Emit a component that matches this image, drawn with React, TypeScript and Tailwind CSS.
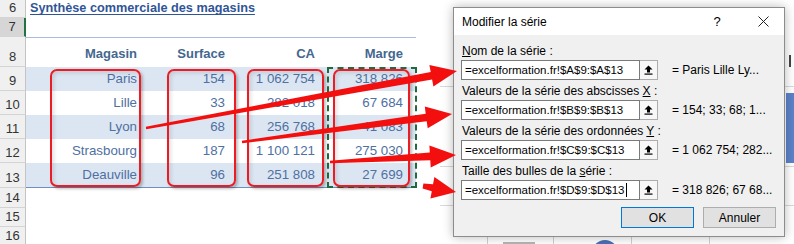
import React from 'react';
import clsx from 'clsx';

const stores = [
  { name: 'Paris', surface: '154', ca: '1 062 754', marge: '318 826' },
  { name: 'Lille', surface: '33', ca: '282 018', marge: '67 684' },
  { name: 'Lyon', surface: '68', ca: '256 768', marge: '41 083' },
  { name: 'Strasbourg', surface: '187', ca: '1 100 121', marge: '275 030' },
  { name: 'Deauville', surface: '96', ca: '251 808', marge: '27 699' },
];

const dataHeights = ['h-[24px]', 'h-[24px]', 'h-[24px]', 'h-[24px]', 'h-[25px]'];

// arrow shape: thin tail, thicker neck, triangular head
function arrowPoints(tx: number, ty: number, px: number, py: number, w1 = 1, w2 = 3.5, head = 26, half = 11) {
  const dx = px - tx;
  const dy = py - ty;
  const len = Math.hypot(dx, dy);
  const ux = dx / len;
  const uy = dy / len;
  const nx = -uy;
  const ny = ux;
  const bx = px - ux * head;
  const by = py - uy * head;
  const pts = [
    [tx + nx * w1, ty + ny * w1],
    [bx + nx * w2, by + ny * w2],
    [bx + nx * half, by + ny * half],
    [px, py],
    [bx - nx * half, by - ny * half],
    [bx - nx * w2, by - ny * w2],
    [tx - nx * w1, ty - ny * w1],
  ];
  return pts.map((p) => p.map((v) => v.toFixed(1)).join(',')).join(' ');
}

const RowHead: React.FC<{ n: number; active?: boolean }> = ({ n, active }) => (
  <div
    className={clsx(
      'flex w-[26px] shrink-0 items-end justify-center border-b border-b-[#d4d4d4] pb-[2px] text-[13px] leading-[15px]',
      active ? 'border-r-2 border-r-[#217346] bg-[#d6d6d6] text-[#333]' : 'border-r border-r-[#c4c4c4] bg-[#f0f0f0] text-[#333]'
    )}
  >
    {n}
  </div>
);

const Field: React.FC<{ label: React.ReactNode; formula: string; result: string; caret?: boolean }> = ({ label, formula, result, caret }) => (
  <div className="flex flex-col">
    <div className="h-[16px] pl-[1px] text-[12px] leading-[16px]">{label}</div>
    <div className="mt-[1px] flex h-[20px] items-center">
      <div className="flex h-[20px] w-[179px] items-center border border-[#7a7a7a] bg-white px-[3px] text-[11.5px] leading-[18px]">
        <span className="whitespace-nowrap">{formula}</span>
        {caret && <span className="ml-[1px] h-[14px] w-px bg-black" />}
      </div>
      <div className="flex h-[20px] w-[18px] items-center justify-center border border-l-0 border-[#adadad] bg-[#f7f7f7]">
        <svg width="9" height="10" viewBox="0 0 9 10">
          <polygon points="4.5,0.5 8.5,4.5 6,4.5 6,7.5 3,7.5 3,4.5 0.5,4.5" fill="#000" />
          <rect x="0.5" y="8.5" width="8" height="1.2" fill="#000" />
        </svg>
      </div>
      <span className="ml-[14px] whitespace-nowrap text-[12px]">{result}</span>
    </div>
  </div>
);

export default function App() {
  return (
    <div className="relative h-[244px] w-[794px] overflow-hidden bg-white font-['Liberation_Sans',Arial,sans-serif]">
      {/* Sheet */}
      <div className="flex flex-col">
        {/* row 6 */}
        <div className="flex h-[18px]">
          <RowHead n={6} />
          <div className="flex items-center pl-[4px] text-[12.7px] font-bold text-[#2f5597] underline underline-offset-2">
            Synthèse commerciale des magasins
          </div>
        </div>
        {/* row 7 */}
        <div className="flex h-[19px]">
          <RowHead n={7} active />
        </div>
        {/* row 8 headers */}
        <div className="flex h-[30px]">
          <RowHead n={8} />
          <div className="flex w-[390px] border-t border-[#a9bcd9] pt-[2px] text-[13px] font-bold text-[#44678f]">
            <div className="flex w-[124px] items-center justify-end pr-[13px]">Magasin</div>
            <div className="flex w-[89px] items-center justify-end pr-[14px]">Surface</div>
            <div className="flex w-[89px] items-center justify-end pr-[13px]">CA</div>
            <div className="flex w-[88px] items-center justify-end pr-[13px]">Marge</div>
          </div>
        </div>
        {/* rows 9-13 */}
        {stores.map((s, i) => (
          <div key={s.name} className={clsx('flex', dataHeights[i])}>
            <RowHead n={9 + i} />
            <div
              className={clsx(
                'flex w-[390px] text-[13.3px] text-[#4e70a2]',
                i % 2 === 0 ? 'bg-[#dce6f2]' : 'bg-white',
                i === 4 && 'border-b border-[#6f8fbf]'
              )}
            >
              <div className="flex w-[124px] items-center justify-end pr-[13px] whitespace-nowrap">{s.name}</div>
              <div className="flex w-[89px] items-center justify-end pr-[14px] whitespace-nowrap">{s.surface}</div>
              <div className="flex w-[89px] items-center justify-end pr-[13px] whitespace-nowrap">{s.ca}</div>
              <div className="flex w-[88px] items-center justify-end pr-[13px] whitespace-nowrap">{s.marge}</div>
            </div>
          </div>
        ))}
        <div className="flex h-[20px]">
          <RowHead n={14} />
        </div>
        <div className="flex h-[19px]">
          <RowHead n={15} />
        </div>
        <div className="flex h-[19px]">
          <RowHead n={16} />
        </div>
      </div>

      {/* Copy marquee on Marge column */}
      <div className="absolute left-[327px] top-[67px] h-[121px] w-[90px] border-2 border-dashed border-[#1f6b3f]" />

      {/* Red highlight boxes */}
      <div className="absolute left-[50px] top-[69px] h-[118px] w-[91px] rounded-[7px] border-2 border-[#ec1c24] shadow-[2px_2px_3px_rgba(0,0,0,0.25),inset_2px_2px_4px_rgba(0,0,0,0.12)]" />
      <div className="absolute left-[167px] top-[69px] h-[118px] w-[69px] rounded-[7px] border-2 border-[#ec1c24] shadow-[2px_2px_3px_rgba(0,0,0,0.25),inset_2px_2px_4px_rgba(0,0,0,0.12)]" />
      <div className="absolute left-[247px] top-[69px] h-[118px] w-[77px] rounded-[7px] border-2 border-[#ec1c24] shadow-[2px_2px_3px_rgba(0,0,0,0.25),inset_2px_2px_4px_rgba(0,0,0,0.12)]" />
      <div className="absolute left-[333px] top-[69px] h-[118px] w-[77px] rounded-[7px] border-2 border-[#ec1c24] shadow-[2px_2px_3px_rgba(0,0,0,0.25),inset_2px_2px_4px_rgba(0,0,0,0.12)]" />

      {/* Chart behind the dialog */}
      <svg className="absolute left-[416px] top-0" width="378" height="244" viewBox="416 0 378 244">
        <line x1="440" y1="86.5" x2="794" y2="86.5" stroke="#d9d9d9" />
        <line x1="440" y1="166.5" x2="794" y2="166.5" stroke="#d9d9d9" />
        <line x1="440" y1="205.5" x2="794" y2="205.5" stroke="#d9d9d9" />
        <rect x="786" y="93" width="8" height="70" fill="#5b82c8" />
        <rect x="789" y="55" width="2" height="12" fill="#444" />
        <line x1="487.5" y1="200" x2="487.5" y2="244" stroke="#d0d0d0" />
        <line x1="553.5" y1="200" x2="553.5" y2="244" stroke="#d0d0d0" />
        <line x1="631.5" y1="200" x2="631.5" y2="244" stroke="#d0d0d0" />
        <line x1="709.5" y1="200" x2="709.5" y2="244" stroke="#d0d0d0" />
        <rect x="503" y="242" width="32" height="2" fill="#b5b5b5" />
        <circle cx="605" cy="253" r="13" fill="#4a6fb5" />
      </svg>

      {/* Dialog */}
      <div className="absolute left-[453px] top-[7px] flex w-[332px] flex-col border border-[#8c8c8c] bg-[#f0f0f0] text-black shadow-[0_0_10px_rgba(0,0,0,0.28)]">
        <div className="flex h-[27px] items-center bg-white pl-[8px] text-[12px]">
          <span>Modifier la série</span>
          <span className="ml-auto w-[8px] text-center text-[13px]">?</span>
          <svg className="ml-[37px] mr-[15px]" width="11" height="11" viewBox="0 0 11 11">
            <path d="M0.5 0.5 L10.5 10.5 M10.5 0.5 L0.5 10.5" stroke="#222" strokeWidth="1" />
          </svg>
        </div>
        <div className="flex flex-col gap-[3px] px-[7px] pt-[8px]">
          <Field label={<><span className="underline">N</span>om de la série :</>} formula="=excelformation.fr!$A$9:$A$13" result="= Paris Lille Ly..." />
          <Field label={<>Valeurs de la série des abscisses <span className="underline">X</span> :</>} formula="=excelformation.fr!$B$9:$B$13" result="= 154; 33; 68; 1..." />
          <Field label={<>Valeurs de la série des ordonnées <span className="underline">Y</span> :</>} formula="=excelformation.fr!$C$9:$C$13" result="= 1 062 754; 282..." />
          <Field label={<>Taille des bulles de la <span className="underline">s</span>érie :</>} formula="=excelformation.fr!$D$9:$D$13" result="= 318 826; 67 68..." caret />
        </div>
        <div className="mt-[7px] flex justify-end gap-[9px] pb-[8px] pr-[8px] text-[12px]">
          <div className="flex h-[21px] w-[73px] items-center justify-center border border-[#0078d7] bg-[#e1e1e1]">OK</div>
          <div className="flex h-[21px] w-[73px] items-center justify-center border border-[#adadad] bg-[#e1e1e1]">Annuler</div>
        </div>
      </div>

      {/* Red arrows */}
      <svg className="pointer-events-none absolute left-0 top-0" width="794" height="244" viewBox="0 0 794 244">
        <polygon points={arrowPoints(146, 128, 457, 71, 1.2, 3.8)} fill="#f40f0f" />
        <polygon points={arrowPoints(242, 142, 452, 114, 1.2, 3.8)} fill="#f40f0f" />
        <polygon points={arrowPoints(330, 162, 456, 155, 1.2, 3.8)} fill="#f40f0f" />
        <polygon points={arrowPoints(423, 186, 456, 192, 2.5, 3.5, 24, 11)} fill="#f40f0f" />
      </svg>
    </div>
  );
}
